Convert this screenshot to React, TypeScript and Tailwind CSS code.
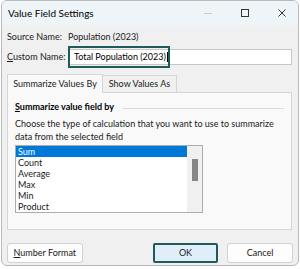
import React from 'react';

const font = { fontFamily: 'Lato, "Noto Sans", sans-serif' };

const items = ['Sum', 'Count', 'Average', 'Max', 'Min', 'Product'];

const App: React.FC = () => {
  return (
    <div className="w-[300px] h-[269px] bg-white whitespace-nowrap" style={font}>
      <div className="ml-[1px] w-[298px] h-[266px] flex flex-col bg-[#f0f0f0] border border-[#b9b9b9] rounded-[6px] overflow-hidden text-[9px] leading-[12px] text-[#1a1a1a]">
        {/* タイトルバー */}
        <div className="h-[24px] shrink-0 flex items-center bg-[#eef5f8] pl-[6px] relative">
          <span className="text-[10px] text-black">Value Field Settings</span>
          <svg className="absolute left-[201px] top-[7px]" width="10" height="10" viewBox="0 0 10 10">
            <path d="M1 5.5h8" stroke="#c8cdd0" strokeWidth="1" />
          </svg>
          <svg className="absolute left-[238px] top-[7px]" width="10" height="10" viewBox="0 0 10 10">
            <rect x="1.5" y="1.5" width="7" height="7" fill="none" stroke="#333" strokeWidth="1" />
          </svg>
          <svg className="absolute left-[275px] top-[7px]" width="10" height="10" viewBox="0 0 10 10">
            <path d="M1.5 1.5l7 7M8.5 1.5l-7 7" stroke="#333" strokeWidth="1" />
          </svg>
        </div>

        <div className="flex flex-col px-[5px]">
          <div className="flex items-center h-[12px] mt-[6px]">
            <span className="w-[61px]">Source Name:</span>
            <span>Population (2023)</span>
          </div>

          <div className="flex items-center mt-[2px] h-[24px]">
            <span className="w-[62px]">
              <span className="underline">C</span>ustom Name:
            </span>
            <div className="relative flex-1 h-[16px] bg-white border border-[#c6c6c6] mr-[1px]">
              <div className="absolute left-[-2px] top-[-4px] w-[102px] h-[22px] border-2 border-[#1f5b5b] flex items-center pl-[4px]">
                <span className="text-black">Total Population (2023)</span>
                <span className="w-px h-[10px] bg-black ml-[1px]" />
              </div>
            </div>
          </div>

          {/* タブ */}
          <div className="flex mt-[5px] h-[18px]">
            <div className="w-[96px] bg-[#f9f9f9] border border-b-0 border-[#d6d6d6] flex items-center justify-center relative z-10 h-[19px]">
              Summarize Values By
            </div>
            <div className="w-[74px] bg-[#f0f0f0] border border-l-0 border-b-0 border-[#d6d6d6] flex items-center justify-center mt-[1px] h-[17px]">
              Show Values As
            </div>
          </div>

          <div className="h-[138px] mr-[1px] bg-[#f9f9f9] border border-[#d6d6d6] px-[7px] pt-[8px]">
            <div className="flex items-center">
              <span className="font-bold text-black">
                <span className="underline">S</span>ummarize value field by
              </span>
              <div className="flex-1 ml-[8px] h-px bg-[#dcdcdc] mt-[2px]" />
            </div>
            <div className="mt-[4px] leading-[13px]">
              Choose the type of calculation that you want to use to summarize
              <br />
              data from the selected field
            </div>
            <div className="mt-[2px] w-[188px] h-[68px] bg-white border border-[#adadad] flex overflow-hidden">
              <div className="flex-1 flex flex-col">
                {items.map((it, i) => (
                  <div
                    key={it}
                    className={`h-[11px] leading-[11px] pl-[2px] ${
                      i === 0 ? 'bg-[#0078d7] text-white' : 'text-[#1a1a1a]'
                    }`}
                  >
                    {it}
                  </div>
                ))}
              </div>
              <div className="w-[15px] bg-[#f0f0f0] flex justify-center pt-[13px]">
                <div className="w-[6px] h-[22px] bg-[#868686]" />
              </div>
            </div>
          </div>

          {/* ボタン */}
          <div className="flex mt-[13px]">
            <button className="w-[76px] h-[20px] bg-[#fdfdfd] border border-[#d0d0d0] rounded-[3px] text-[9px]">
              <span className="underline">N</span>umber Format
            </button>
            <button className="w-[66px] h-[20px] ml-[70px] bg-[#e0eef9] border-2 border-[#1f5b5b] rounded-[2px] text-[9px]">
              OK
            </button>
            <button className="w-[66px] h-[20px] ml-[9px] bg-[#fdfdfd] border border-[#d0d0d0] rounded-[3px] text-[9px]">
              Cancel
            </button>
          </div>
        </div>
      </div>
    </div>
  );
};

export default App;
